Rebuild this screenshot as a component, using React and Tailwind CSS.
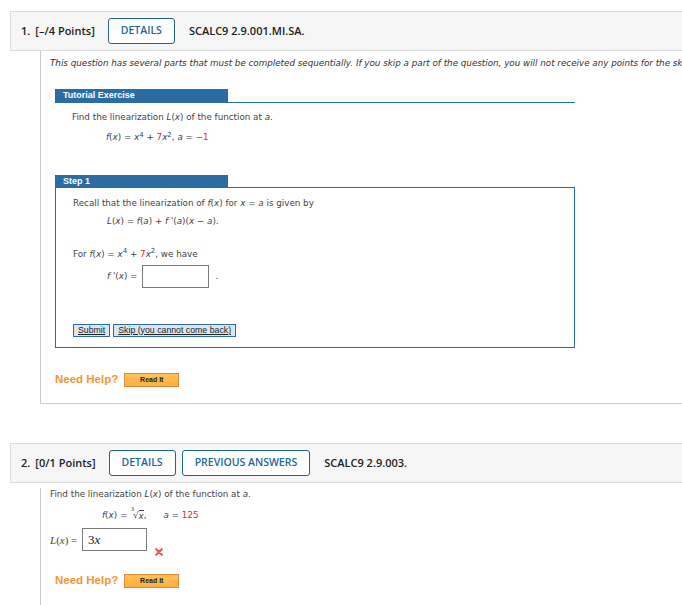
import React from "react";

const sans = "font-['DejaVu_Sans',sans-serif]";
const open = "font-['Open_Sans',sans-serif]";
const arial = "font-['Liberation_Sans',Arial,sans-serif]";

function Header({ num, points, buttons, code }) {
  return (
    <div
      className={`ml-[10px] h-[40px] w-[800px] flex items-center border border-[#dcdcdc] bg-[#f6f6f6] pl-[10px] ${open}`}
    >
      <span className="text-[11px] font-semibold text-[#222]">
        {num}.<span className="ml-[5px]">[{points} Points]</span>
      </span>
      <div className="flex items-center gap-[6px] ml-[13px]">
        {buttons.map((b) => (
          <span
            key={b}
            className="h-[26px] px-[12px] flex items-center rounded-[3px] border border-[#1f6590] bg-white text-[10.5px] font-semibold text-[#1e6797]"
          >
            {b}
          </span>
        ))}
      </div>
      <span className="ml-[14px] text-[11px] font-semibold text-[#222]">
        {code}
      </span>
    </div>
  );
}

function NeedHelp() {
  return (
    <div className={`flex items-center gap-[6px] ${arial}`}>
      <span className="text-[11.5px] font-bold text-[#f7942f]">Need Help?</span>
      <span className="w-[55px] h-[14px] flex items-center justify-center border border-[#df8a3c] bg-gradient-to-b from-[#ffc25a] to-[#fdae3f] text-[7px] font-bold text-[#222]">
        Read It
      </span>
    </div>
  );
}

function I({ children }) {
  return <i className="italic">{children}</i>;
}

export default function App() {
  return (
    <div className="w-[682px] h-[605px] overflow-hidden bg-white pt-[11px] text-[#444]">
      {/* Question 1 */}
      <Header
        num="1"
        points="–/4"
        buttons={["DETAILS"]}
        code="SCALC9 2.9.001.MI.SA."
      />
      <div className="ml-[40px] w-[800px] h-[353px] border-l border-b border-[#cccccc] pl-[9px]">
        <p className={`${sans} italic text-[8.75px] text-[#333] pt-[6px] whitespace-nowrap`}>
          This question has several parts that must be completed sequentially. If you skip a part of the question, you will not receive any points for the skipped part, and you will not be able to come back to the skipped part.
        </p>

        <div className="ml-[5px] mt-[19px] w-[520px] border-b border-[#2b6ca3]">
          <div className={`w-[173px] h-[13px] bg-[#2b6ca3] pl-[8px] flex items-center text-[9px] font-bold text-white ${arial}`}>
            Tutorial Exercise
          </div>
        </div>

        <div className={`${sans} text-[8.75px] text-[#444]`}>
          <p className="ml-[22px] mt-[8px]">
            Find the linearization <I>L</I>(<I>x</I>) of the function at <I>a</I>.
          </p>
          <p className="ml-[56px] mt-[7px]">
            <I>f</I>(<I>x</I>) = <I>x</I>
            <sup className="text-[7px]">4</sup> +{" "}
            <span className="text-[#e8262b]">7</span>
            <I>x</I>
            <sup className="text-[7px]">2</sup>, <I>a</I> ={" "}
            <span className="text-[#e8262b]">−1</span>
          </p>
        </div>

        {/* Step 1 */}
        <div className="ml-[5px] mt-[31px] w-[520px]">
          <div className={`w-[173px] h-[12px] bg-[#2b6ca3] pl-[8px] flex items-center text-[9px] font-bold text-white ${arial}`}>
            Step 1
          </div>
          <div className={`h-[161px] border-[1.5px] border-[#2b6ca3] pl-[17px] ${sans} text-[8.75px] text-[#444]`}>
            <p className="mt-[9px]">
              Recall that the linearization of <I>f</I>(<I>x</I>) for <I>x</I> = <I>a</I> is given by
            </p>
            <p className="ml-[34px] mt-[4px]">
              <I>L</I>(<I>x</I>) = <I>f</I>(<I>a</I>) + <I>f</I> '(<I>a</I>)(<I>x</I> − <I>a</I>).
            </p>
            <p className="mt-[20px]">
              For <I>f</I>(<I>x</I>) = <I>x</I>
              <sup className="text-[7px]">4</sup> +{" "}
              <span className="text-[#e8262b]">7</span>
              <I>x</I>
              <sup className="text-[7px]">2</sup>, we have
            </p>
            <div className="ml-[34px] mt-[4px] flex items-center">
              <span>
                <I>f</I> '(<I>x</I>) =
              </span>
              <span className="ml-[5px] w-[67px] h-[23px] border border-[#7a7a7a] bg-white" />
              <span className="ml-[6px]">.</span>
            </div>
            <div className={`mt-[36px] flex gap-[3px] ${arial} text-[8.75px] text-[#222]`}>
              <span className="h-[13px] px-[4px] flex items-center border border-[#2b6ca3] bg-[#dbe6f1] underline">
                Submit
              </span>
              <span className="h-[13px] px-[4px] flex items-center border border-[#2b6ca3] bg-[#dbe6f1] underline">
                Skip (you cannot come back)
              </span>
            </div>
          </div>
        </div>

        <div className="ml-[5px] mt-[23px]">
          <NeedHelp />
        </div>
      </div>

      {/* Question 2 */}
      <div className="mt-[39px]">
        <Header
          num="2"
          points="0/1"
          buttons={["DETAILS", "PREVIOUS ANSWERS"]}
          code="SCALC9 2.9.003."
        />
      </div>
      <div className="ml-[40px] w-[800px] h-[130px] border-l border-[#cccccc] pl-[9px]">
        <div className={`${sans} text-[8.75px] text-[#444]`}>
          <p className="mt-[5px]">
            Find the linearization <I>L</I>(<I>x</I>) of the function at <I>a</I>.
          </p>
          <p className="ml-[52px] mt-[8px] flex items-center">
            <I>f</I>(<I>x</I>) =&nbsp;
            <span className="relative inline-flex items-center">
              <span className="absolute left-[1px] -top-[3px] text-[5px]">3</span>
              <span className="ml-[3px]">√</span>
              <span className="border-t border-[#444] leading-[10px]">
                <I>x</I>
              </span>
            </span>
            ,<span className="ml-[17px]"><I>a</I></span>&nbsp;=&nbsp;
            <span className="text-[#e8262b]">125</span>
          </p>
        </div>
        <div className="mt-[6px] flex items-start">
          <div className="flex items-center h-[23px]">
            <span className="w-[30px] font-['Liberation_Serif',serif] text-[11px] text-[#444]">
              <I>L</I>(<I>x</I>) =
            </span>
            <span className="ml-[2px] w-[65px] h-[23px] border border-[#7a7a7a] bg-white flex items-center pl-[5px] font-['Liberation_Serif',serif] text-[13px] text-[#222]">
              3<I>x</I>
            </span>
          </div>
          <svg className="ml-[8px] mt-[20px]" width="8" height="8" viewBox="0 0 10 10">
            <path d="M1.5 1.5 L8.5 8.5 M8.5 1.5 L1.5 8.5" stroke="#f0505a" strokeWidth="2.6" strokeLinecap="round" />
          </svg>
        </div>
        <div className="ml-[5px] mt-[16px]">
          <NeedHelp />
        </div>
      </div>
    </div>
  );
}
